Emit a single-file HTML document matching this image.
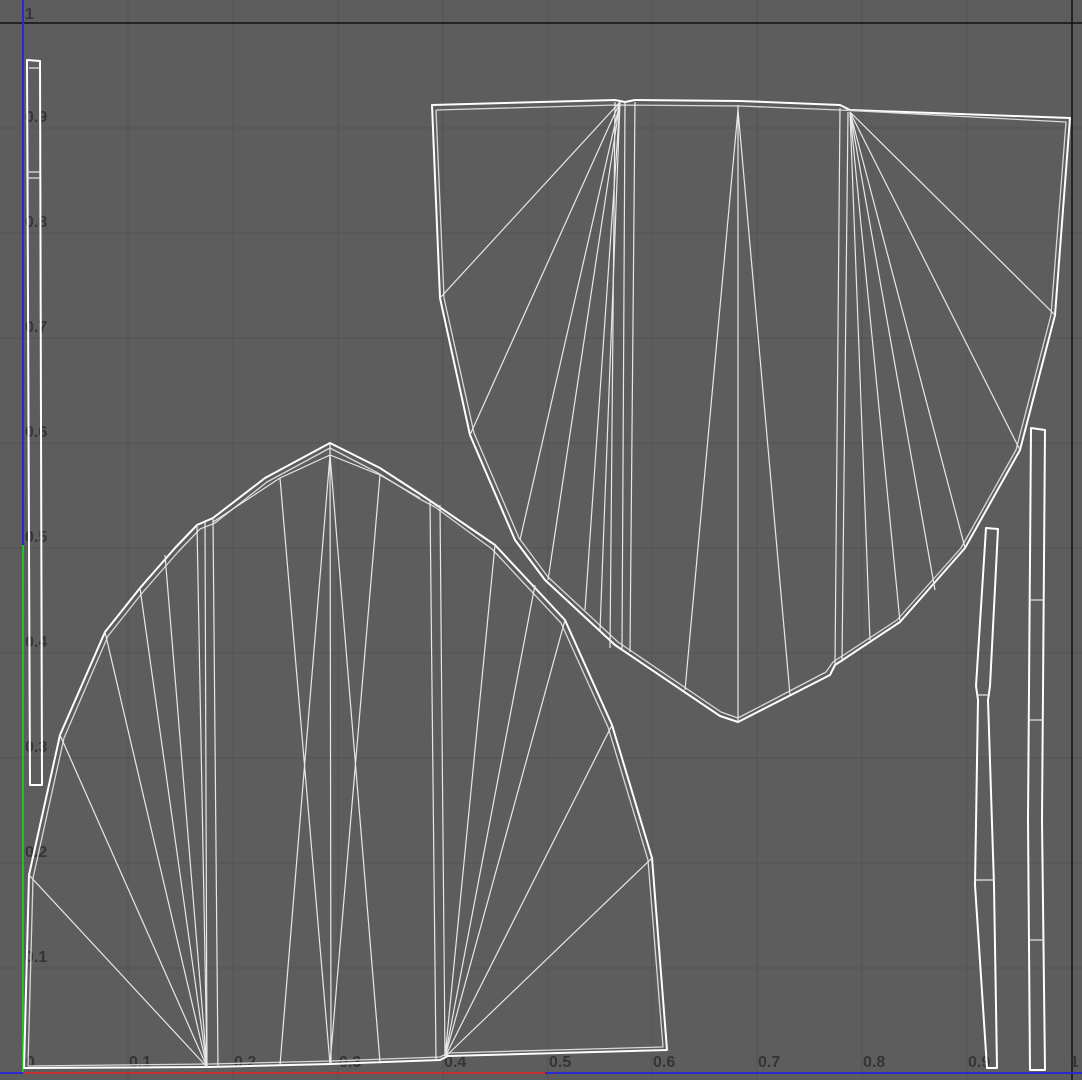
<!DOCTYPE html>
<html><head><meta charset="utf-8"><style>
html,body{margin:0;padding:0;background:#5d5d5d;width:1082px;height:1080px;overflow:hidden}
svg{display:block}
text{font-family:"Liberation Sans",sans-serif;font-weight:bold;font-size:16px;fill:#353535}
</style></head><body>
<svg width="1082" height="1080" viewBox="0 0 1082 1080" xmlns="http://www.w3.org/2000/svg">
<rect width="1082" height="1080" fill="#5d5d5d"/>
<g stroke="#525252" stroke-width="1">
<line x1="128" y1="0" x2="128" y2="1080"/><line x1="233" y1="0" x2="233" y2="1080"/><line x1="338" y1="0" x2="338" y2="1080"/><line x1="443" y1="0" x2="443" y2="1080"/><line x1="548" y1="0" x2="548" y2="1080"/><line x1="652" y1="0" x2="652" y2="1080"/><line x1="757" y1="0" x2="757" y2="1080"/><line x1="862" y1="0" x2="862" y2="1080"/><line x1="967" y1="0" x2="967" y2="1080"/>
<line x1="0" y1="968" x2="1082" y2="968"/><line x1="0" y1="863" x2="1082" y2="863"/><line x1="0" y1="758" x2="1082" y2="758"/><line x1="0" y1="653" x2="1082" y2="653"/><line x1="0" y1="548" x2="1082" y2="548"/><line x1="0" y1="443" x2="1082" y2="443"/><line x1="0" y1="338" x2="1082" y2="338"/><line x1="0" y1="233" x2="1082" y2="233"/><line x1="0" y1="128" x2="1082" y2="128"/>
</g>
<line x1="0" y1="23" x2="1082" y2="23" stroke="#111" stroke-width="1.5"/>
<line x1="1072" y1="0" x2="1072" y2="1080" stroke="#111" stroke-width="1.5"/>
<line x1="23" y1="0" x2="23" y2="545" stroke="#2a2ad0" stroke-width="2"/>
<line x1="23" y1="545" x2="23" y2="1073" stroke="#22c022" stroke-width="2"/>
<line x1="23" y1="1073" x2="545" y2="1073" stroke="#c03030" stroke-width="2"/>
<line x1="545" y1="1073" x2="1082" y2="1073" stroke="#2a2ad0" stroke-width="2"/>
<line x1="0" y1="1073" x2="23" y2="1073" stroke="#2a2ad0" stroke-width="2"/>
<g>
<text x="25" y="19">1</text><text x="25" y="122">0.9</text><text x="25" y="227">0.8</text><text x="25" y="332">0.7</text><text x="25" y="437">0.6</text><text x="25" y="542">0.5</text><text x="25" y="647">0.4</text><text x="25" y="752">0.3</text><text x="25" y="857">0.2</text><text x="25" y="962">0.1</text>
<text x="26" y="1067">0</text><text x="129" y="1067">0.1</text><text x="234" y="1067">0.2</text><text x="339" y="1067">0.3</text><text x="444" y="1067">0.4</text><text x="549" y="1067">0.5</text><text x="653" y="1067">0.6</text><text x="758" y="1067">0.7</text><text x="863" y="1067">0.8</text><text x="968" y="1067">0.9</text><text x="1070" y="1067">1</text>
</g>
<g fill="none" stroke="#fff" stroke-width="2" stroke-linejoin="round">
<polygon points="24,1068 29,875 60,735 105,632 140,588 175,548 197,525 213,518 265,478 330,443 380,468 420,494 432,502 495,545 565,620 612,725 652,858 667,1050 448,1056 440,1060 330,1064 210,1067"/>
<polygon points="432,105 615,100 625,102 635,100 740,101 840,105 850,110 1070,118 1055,315 1020,450 965,548 900,622 835,665 830,675 738,722 720,716 615,645 545,580 515,540 470,435 440,298"/>
<polygon points="27,60 40,61 42,785 30,785"/>
<polygon points="986,528 998,529 990,686 988,700 994,885 997,1068 987,1068 975,885 978,700 976,686"/>
<polygon points="1031,428 1045,430 1042,820 1045,1070 1030,1070 1028,820"/>
</g>
<g fill="none" stroke="#d8d8d8" stroke-width="1.3" stroke-linejoin="round">
<polyline points="28,1066 33,878 64,738 108,636 143,592 178,552 200,529 215,523 267,482 330,448 378,473 418,498 435,507 492,549 561,623 608,727 648,860 663,1047 448,1053 440,1057 330,1061 210,1064 28,1066"/>
<polyline points="436,110 615,105 740,106 840,110 1066,122 1051,315 1016,450 961,548 897,620 833,662 826,672 738,718 721,712 618,642 548,577 519,538 474,433 444,298 436,110"/>
</g>
<g fill="none" stroke="#e8e8e8" stroke-width="1.2">
<polyline points="205,522 207,1067"/><polyline points="213,519 218,1067"/>
<polyline points="330,443 331,1064"/><polyline points="430,502 436,1060"/><polyline points="440,505 445,1058"/>
<polyline points="213,522 280,478 330,455 380,475 420,498"/>
<polyline points="29,875 207,1067 60,735"/><polyline points="105,632 207,1067 140,588"/><polyline points="165,555 207,1067 197,525"/>
<polyline points="280,478 330,1064 380,475"/><polyline points="330,455 280,1065"/><polyline points="330,455 380,1062"/>
<polyline points="495,545 445,1057 535,585"/><polyline points="565,620 445,1057 612,725"/><polyline points="652,858 445,1057"/>
<polyline points="615,102 610,648"/><polyline points="625,102 622,650"/><polyline points="635,102 630,652"/>
<polyline points="840,108 835,665"/><polyline points="848,112 842,662"/>
<polyline points="738,105 738,722"/><polyline points="738,110 685,690"/><polyline points="738,110 790,695"/>
<polyline points="440,298 620,102 470,435"/><polyline points="520,540 620,102 548,580"/><polyline points="585,610 620,102 600,630"/>
<polyline points="1055,315 850,112 1020,450"/><polyline points="965,548 850,112 935,590"/><polyline points="900,622 850,112 870,640"/>
<polyline points="29,68 40,68"/><polyline points="27,172 40,172"/><polyline points="27,178 40,178"/>
<polyline points="977,695 990,695"/><polyline points="975,880 994,880"/><polyline points="1029,600 1043,600"/><polyline points="1029,720 1043,720"/><polyline points="1029,940 1044,940"/>
</g>
</svg>
</body></html>
